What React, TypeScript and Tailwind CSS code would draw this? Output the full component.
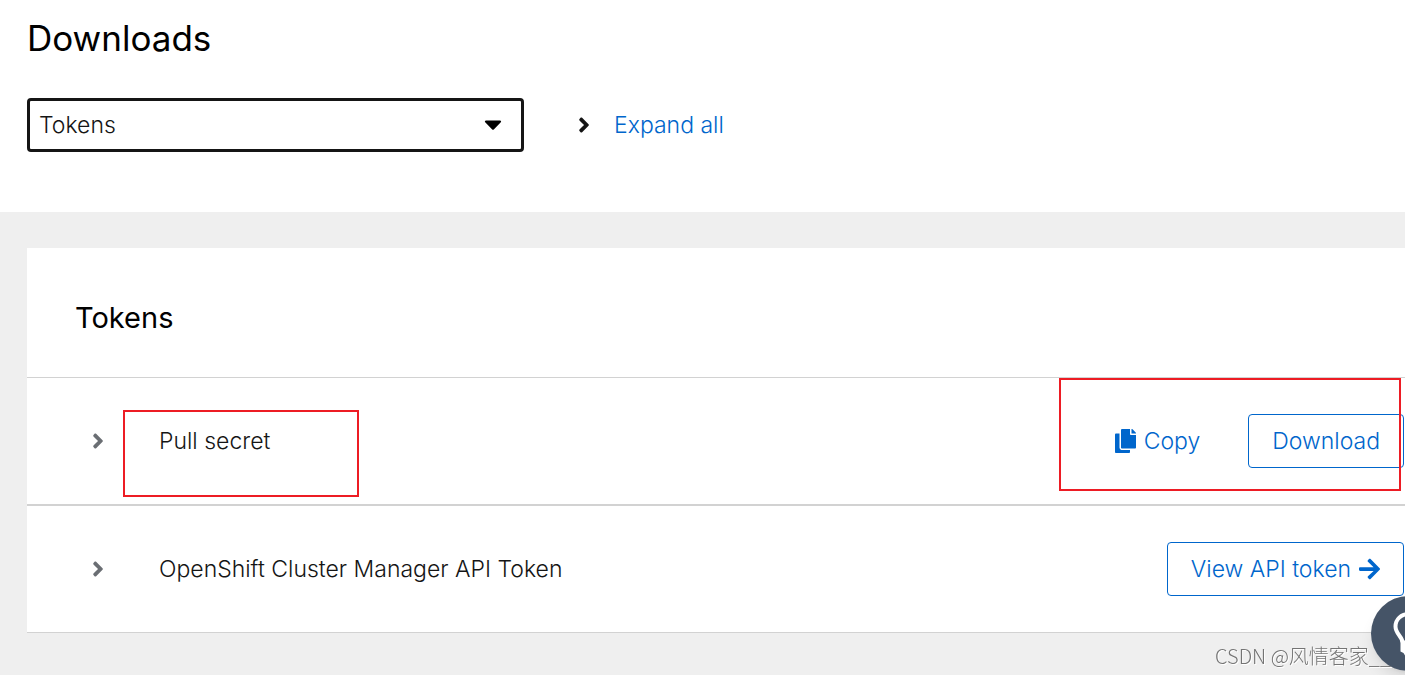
import { useState } from 'react'
import { FaAngleRight, FaArrowRight, FaCaretDown, FaCopy } from 'react-icons/fa'

const outlineButton =
  'inline-flex h-[54px] items-center gap-2 whitespace-nowrap rounded border border-[#0066cc] px-[23px] text-[#0066cc]'

function Toggle({ label, open, onToggle }: { label: string; open: boolean; onToggle: () => void }) {
  return (
    <button type="button" aria-label={label} aria-expanded={open} onClick={onToggle} className="flex text-[#6a6e73]">
      <FaAngleRight className={open ? 'h-6 w-3 rotate-90' : 'h-6 w-3'} />
    </button>
  )
}

function Bulb() {
  return (
    <svg viewBox="0 0 32 44" className="h-11 w-8" fill="none" aria-hidden="true">
      <path
        d="M9.5 30.5C9.5 24.5 2.500 22 2.500 14.500C2.500 7.500 8 2 16 2S29.500 7.500 29.500 14.500C29.500 22 22.500 24.500 22.500 30.500"
        stroke="currentColor"
        strokeWidth="4"
      />
      <path d="M7.500 28.500h17v11l-3 1.500l-1.500 2.500h-8l-1.500-2.500l-3-1.500z" fill="currentColor" />
    </svg>
  )
}

export default function App() {
  const [open, setOpen] = useState<string[]>([])
  const toggle = (id: string) => setOpen((o) => (o.includes(id) ? o.filter((x) => x !== id) : [...o, id]))

  return (
    <div className="min-h-screen overflow-x-hidden bg-[#efefef] font-['Inter',sans-serif] text-[23px] leading-9 font-light text-[#151515]">
      <header className="bg-white px-[27px] pt-[15px] pb-[60px]">
        <h1 className="text-[35px] leading-[46px] font-normal text-black">Downloads</h1>
        <div className="mt-[37px] flex items-center">
          <div className="relative w-[497px]">
            <select
              aria-label="Category"
              defaultValue="tokens"
              className="block h-[54px] w-full appearance-none rounded border-[3px] border-[#151515] bg-white px-[9px] outline-none"
            >
              <option value="tokens">Tokens</option>
            </select>
            <FaCaretDown className="pointer-events-none absolute top-3 right-[22px] h-7 w-[18px] text-black" />
          </div>
          <button
            type="button"
            onClick={() => setOpen(['pull', 'api'])}
            className="ml-[54px] flex items-center gap-6 text-[#0066cc]"
          >
            <FaAngleRight className="h-6 w-3 text-[#151515]" />
            Expand all
          </button>
        </div>
      </header>

      <main className="pt-9 pl-[27px]">
        <section className="bg-white">
          <h2 className="px-12 pt-12 pb-[37px] text-[29px] leading-[44px] font-normal text-black">Tokens</h2>
          <table className="w-full border-t border-[#d2d2d2]">
            <tbody>
              <tr className="h-[127px] border-b-2 border-[#d2d2d2]">
                <td className="w-24 pl-[65px]">
                  <Toggle label="Pull secret details" open={open.includes('pull')} onToggle={() => toggle('pull')} />
                </td>
                <td className="relative pl-9">
                  Pull secret
                  <div className="pointer-events-none absolute top-8 left-0 h-[87px] w-[236px] border-2 border-[#ed1c24]" />
                </td>
                <td className="relative pr-px">
                  <div className="flex items-center justify-end gap-12">
                    <button type="button" className="flex items-center gap-2 text-[#0066cc]">
                      <FaCopy className="h-6 w-[21px]" />
                      Copy
                    </button>
                    <button type="button" className={outlineButton}>Download</button>
                  </div>
                  <div className="pointer-events-none absolute top-0 right-1 h-[113px] w-[342px] border-2 border-[#ed1c24]" />
                </td>
              </tr>
              <tr className="h-32 border-b border-[#d2d2d2]">
                <td className="w-24 pl-[65px]">
                  <Toggle label="API token details" open={open.includes('api')} onToggle={() => toggle('api')} />
                </td>
                <td className="pl-9">OpenShift Cluster Manager API Token</td>
                <td className="pr-px">
                  <div className="flex justify-end">
                    <a href="#token" className={outlineButton}>
                      View API token
                      <FaArrowRight className="h-6 w-[21px]" />
                    </a>
                  </div>
                </td>
              </tr>
            </tbody>
          </table>
        </section>
      </main>

      {/* Help launcher, half outside the window */}
      <button
        type="button"
        aria-label="Help"
        className="fixed right-[-41px] bottom-1 flex size-[75px] items-center justify-center rounded-full bg-[#455467] text-white shadow-lg"
      >
        <Bulb />
      </button>
      <div className="pointer-events-none fixed right-[14px] bottom-1 font-['Noto_Sans_CJK_SC',sans-serif] text-[20px] leading-[30px] font-light text-[#747474] [text-shadow:1px_1px_0_#fff]">
        CSDN @风情客家__
      </div>
    </div>
  )
}
